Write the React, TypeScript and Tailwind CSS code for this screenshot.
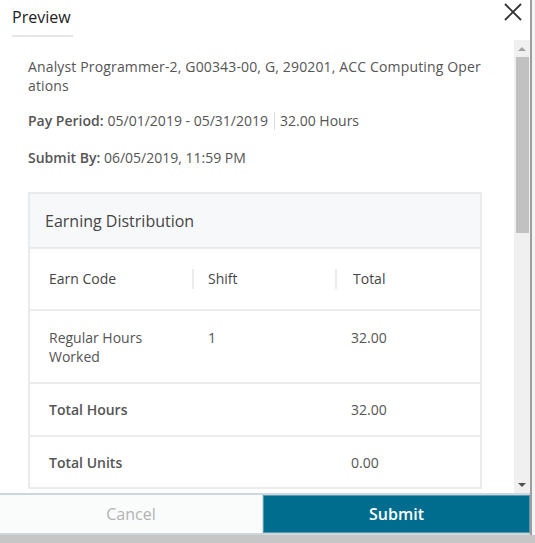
export default function App() {
  return (
    <div className="w-[535px] h-[543px] bg-[#c6c6c6] flex flex-col overflow-hidden font-['Open_Sans',sans-serif]">
      <div className="flex h-[535px]">
        <div className="w-[530px] bg-white flex flex-col">
          {/* header */}
          <div className="h-[40px] flex justify-between">
            <div className="ml-[12px] w-[61px] pt-[5px] pb-[6px] h-[37px] border-b-2 border-[#e6e6e6] text-[16px] leading-[24px] text-[#222]">
              Preview
            </div>
            <svg width="18" height="18" viewBox="0 0 18 18" className="mt-[3px] mr-[8px]">
              <path d="M1 1L17 17M17 1L1 17" stroke="#333" strokeWidth="1.8" />
            </svg>
          </div>

          {/* body */}
          <div className="h-[453px] flex">
            <div className="w-[514px] overflow-hidden pl-[28px] pr-[32px] pt-[17px] text-[14px] text-[#555]">
              <div className="leading-[19px] break-all tracking-[0.15px]">
                Analyst Programmer-2, G00343-00, G, 290201, ACC Computing Oper<br />ations
              </div>
              <div className="mt-[16px] leading-[20px] flex items-center">
                <span className="font-semibold">Pay Period:</span>
                <span className="ml-[4px]">05/01/2019 - 05/31/2019</span>
                <span className="ml-[6px] mr-[5px] w-px h-[18px] bg-[#dcdcdc]" />
                <span>32.00 Hours</span>
              </div>
              <div className="mt-[17px] leading-[20px]">
                <span className="font-semibold">Submit By:</span> 06/05/2019, 11:59 PM
              </div>

              <div className="mt-[24px] border-2 border-[#e9ebed]">
                <div className="h-[55px] flex items-center pl-[15px] bg-[#f7f8fa] border-b-2 border-[#e9ebed] text-[16px] text-[#454545]">
                  Earning Distribution
                </div>
                <div className="h-[62px] flex items-center border-b-2 border-[#ececec] text-[#454545]">
                  <div className="w-[162px] pl-[19px] leading-[20px]">Earn Code</div>
                  <div className="w-[143px] pl-[14px] h-[20px] leading-[20px] border-l-2 border-[#ececec]">Shift</div>
                  <div className="flex-1 pl-[16px] h-[20px] leading-[20px] border-l-2 border-[#ececec]">Total</div>
                </div>
                <div className="flex pt-[17px] pb-[16px] leading-[19px] border-b-2 border-[#ececec]">
                  <div className="w-[162px] pl-[19px] pr-[24px]">Regular Hours Worked</div>
                  <div className="w-[143px] pl-[16px]">1</div>
                  <div className="flex-1 pl-[16px]">32.00</div>
                </div>
                <div className="h-[53px] flex items-center border-b-2 border-[#ececec]">
                  <div className="w-[305px] pl-[19px] font-semibold">Total Hours</div>
                  <div className="flex-1 pl-[16px]">32.00</div>
                </div>
                <div className="h-[50px] flex items-center">
                  <div className="w-[305px] pl-[19px] font-semibold">Total Units</div>
                  <div className="flex-1 pl-[16px]">0.00</div>
                </div>
              </div>
              <div className="h-[40px]" />
            </div>

            {/* scrollbar */}
            <div className="w-[16px] bg-[#f0f0f0] flex flex-col">
              <div className="h-[17px] flex items-center justify-center">
                <div className="w-0 h-0 border-x-[4px] border-x-transparent border-b-[4px] border-b-[#a3a3a3]" />
              </div>
              <div className="ml-[2px] mr-[1px] h-[176px] bg-[#c1c1c1]" />
              <div className="flex-1" />
              <div className="h-[17px] flex items-center justify-center">
                <div className="w-0 h-0 border-x-[4px] border-x-transparent border-t-[4px] border-t-[#505050]" />
              </div>
            </div>
          </div>

          {/* footer */}
          <div className="h-[42px] flex border-t-2 border-b-2 border-[#cbd7dc] text-[16px]">
            <button className="w-[263px] bg-[#fafbfb] text-[#b3b3b3] border-r border-[#d5dde0]">Cancel</button>
            <button className="flex-1 bg-[#006d8f] border border-[#5c98ac] text-white font-semibold">Submit</button>
          </div>
        </div>
        <div className="w-[2px] bg-[#9e9e9e]" />
        <div className="flex-1 bg-[#f3f3f3]" />
      </div>
      <div className="flex-1 bg-[#c6c6c6]" />
    </div>
  );
}
